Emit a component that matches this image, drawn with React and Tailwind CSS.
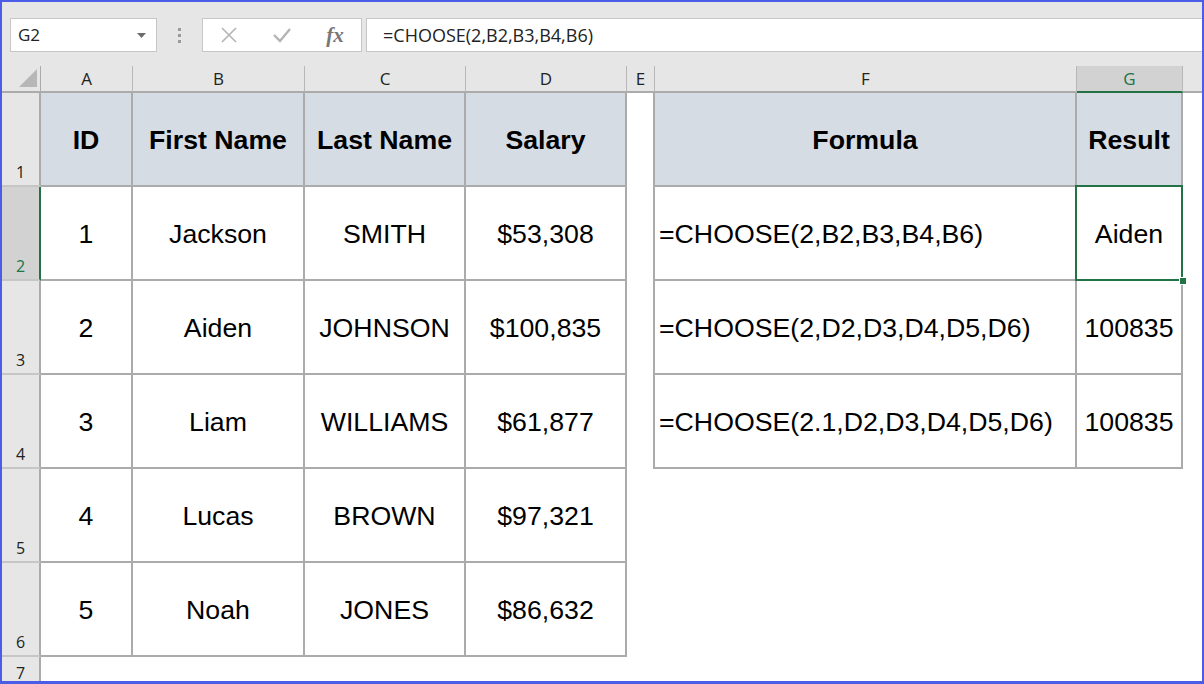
import React from 'react';

const cols = ['A', 'B', 'C', 'D', 'E', 'F', 'G'];

const rows = [
    { n: 1, a: 'ID', b: 'First Name', c: 'Last Name', d: 'Salary', f: 'Formula', g: 'Result', head: true },
    { n: 2, a: '1', b: 'Jackson', c: 'SMITH', d: '$53,308', f: '=CHOOSE(2,B2,B3,B4,B6)', g: 'Aiden' },
    { n: 3, a: '2', b: 'Aiden', c: 'JOHNSON', d: '$100,835', f: '=CHOOSE(2,D2,D3,D4,D5,D6)', g: '100835' },
    { n: 4, a: '3', b: 'Liam', c: 'WILLIAMS', d: '$61,877', f: '=CHOOSE(2.1,D2,D3,D4,D5,D6)', g: '100835' },
    { n: 5, a: '4', b: 'Lucas', c: 'BROWN', d: '$97,321' },
    { n: 6, a: '5', b: 'Noah', c: 'JONES', d: '$86,632' },
];

const cellFont = "font-['Liberation_Sans',Arial,sans-serif] text-[26.7px] text-black pt-[3px]";
const uiFont = "font-['Open_Sans','Liberation_Sans',sans-serif]";

const App = () => {
    return (
        <div className="w-[1204px] h-[684px] overflow-hidden border-[#4b5ce6] border-t-2 border-l-2 border-r-2 border-b-[3px] flex flex-col bg-white">
            {/* Formula bar */}
            <div className="h-[64px] shrink-0 bg-[#e6e6e6] flex items-start pt-[16px] pl-[8px]">
                <div className="w-[147px] h-[34px] bg-white border border-[#c6c6c6] flex items-center justify-between pl-[7px] pr-[10px]">
                    <span className={`${uiFont} text-[17px] text-[#222]`}>G2</span>
                    <svg width="9" height="5" viewBox="0 0 9 5"><polygon points="0,0 9,0 4.5,5" fill="#6b6b6b" /></svg>
                </div>
                <div className="w-[45px] h-[34px] flex flex-col items-center justify-center gap-[3px]">
                    <div className="w-[3px] h-[3px] bg-[#9a9a9a]" />
                    <div className="w-[3px] h-[3px] bg-[#9a9a9a]" />
                    <div className="w-[3px] h-[3px] bg-[#9a9a9a]" />
                </div>
                <div className="w-[160px] h-[34px] bg-white border border-[#c6c6c6] flex items-center">
                    <div className="w-[52px] flex justify-center">
                        <svg width="18" height="18" viewBox="0 0 18 18"><path d="M2 2 L16 16 M16 2 L2 16" stroke="#b4b4b4" strokeWidth="1.6" /></svg>
                    </div>
                    <div className="w-[54px] flex justify-center">
                        <svg width="20" height="18" viewBox="0 0 20 18"><path d="M2 9 L8 15 L18 3" stroke="#b4b4b4" strokeWidth="2.4" fill="none" /></svg>
                    </div>
                    <div className="w-[52px] flex justify-center">
                        <span className="font-['Liberation_Serif',serif] italic font-bold text-[21px] text-[#777] leading-none">fx</span>
                    </div>
                </div>
                <div className="flex-1 h-[34px] ml-[4px] bg-white border-y border-l border-[#c6c6c6] flex items-center pl-[16px]">
                    <span className={`${uiFont} text-[18px] text-[#222]`}>=CHOOSE(2,B2,B3,B4,B6)</span>
                </div>
            </div>

            {/* Sheet grid */}
            <div className="flex-1 grid grid-cols-[39px_92px_172px_161px_161px_28px_422px_106px_1fr] grid-rows-[27px_repeat(6,94px)_1fr]">
                {/* Column header row */}
                <div className="bg-[#e6e6e6] border-r border-b-2 border-[#ababab] flex items-end justify-end pr-[3px] pb-[4px]">
                    <svg width="18" height="18" viewBox="0 0 18 18"><polygon points="18,0 18,18 0,18" fill="#b7b7b7" /></svg>
                </div>
                {cols.map((c) => (
                    <div
                        key={c}
                        className={`${uiFont} text-[17px] flex items-center justify-center border-r border-[#b8b8b8] ${c === 'G' ? 'bg-[#d2d2d2] text-[#217346] border-b-2 border-b-[#217346]' : 'bg-[#e6e6e6] text-[#222] border-b-2 border-b-[#ababab]'}`}
                    >
                        {c}
                    </div>
                ))}
                <div className="bg-[#e6e6e6] border-b-2 border-[#ababab]" />

                {/* Rows */}
                {rows.map((r) => {
                    const sel = r.n === 2;
                    const fg = r.n <= 4;
                    const bg = r.head ? 'bg-[#d6dce4]' : 'bg-white';
                    const bold = r.head ? 'font-bold' : '';
                    const cell = `${cellFont} ${bold} ${bg} border-r-2 border-b-2 border-[#ababab] flex items-center justify-center`;
                    return (
                        <React.Fragment key={r.n}>
                            <div className={`${uiFont} text-[16px] flex items-end justify-center pb-[1px] border-b-2 border-[#c6c6c6] ${sel ? 'bg-[#d2d2d2] text-[#217346] border-r-2 border-r-[#217346]' : 'bg-[#e6e6e6] text-[#222] border-r-2 border-r-[#ababab]'}`}>
                                {r.n}
                            </div>
                            <div className={cell}>{r.a}</div>
                            <div className={cell}>{r.b}</div>
                            <div className={cell}>{r.c}</div>
                            <div className={cell}>{r.d}</div>
                            <div className={fg ? 'bg-white border-r-2 border-[#ababab]' : 'bg-white'} />
                            {fg ? (
                                <div className={`${cellFont} ${bold} ${bg} border-r-2 border-b-2 border-[#ababab] flex items-center ${r.head ? 'justify-center' : 'justify-start pl-[4px]'}`}>
                                    {r.f}
                                </div>
                            ) : (
                                <div className="bg-white" />
                            )}
                            {fg ? (
                                <div className={`${cell} relative ${sel ? 'z-10' : ''}`}>
                                    {r.g}
                                    {sel && (
                                        <>
                                            <div className="absolute top-[-2px] left-[-2px] right-[-2px] bottom-[-2px] border-2 border-[#217346]" />
                                            <div className="absolute right-[-6px] bottom-[-6px] w-[8px] h-[8px] bg-[#217346] border border-white" />
                                        </>
                                    )}
                                </div>
                            ) : (
                                <div className="bg-white" />
                            )}
                            <div className="bg-white" />
                        </React.Fragment>
                    );
                })}

                {/* Row 7 */}
                <div className={`${uiFont} text-[16px] text-[#222] bg-[#e6e6e6] border-r-2 border-[#ababab] flex items-end justify-center leading-none`}>7</div>
                <div className="col-span-8 bg-white" />
            </div>
        </div>
    );
};

export default App;
